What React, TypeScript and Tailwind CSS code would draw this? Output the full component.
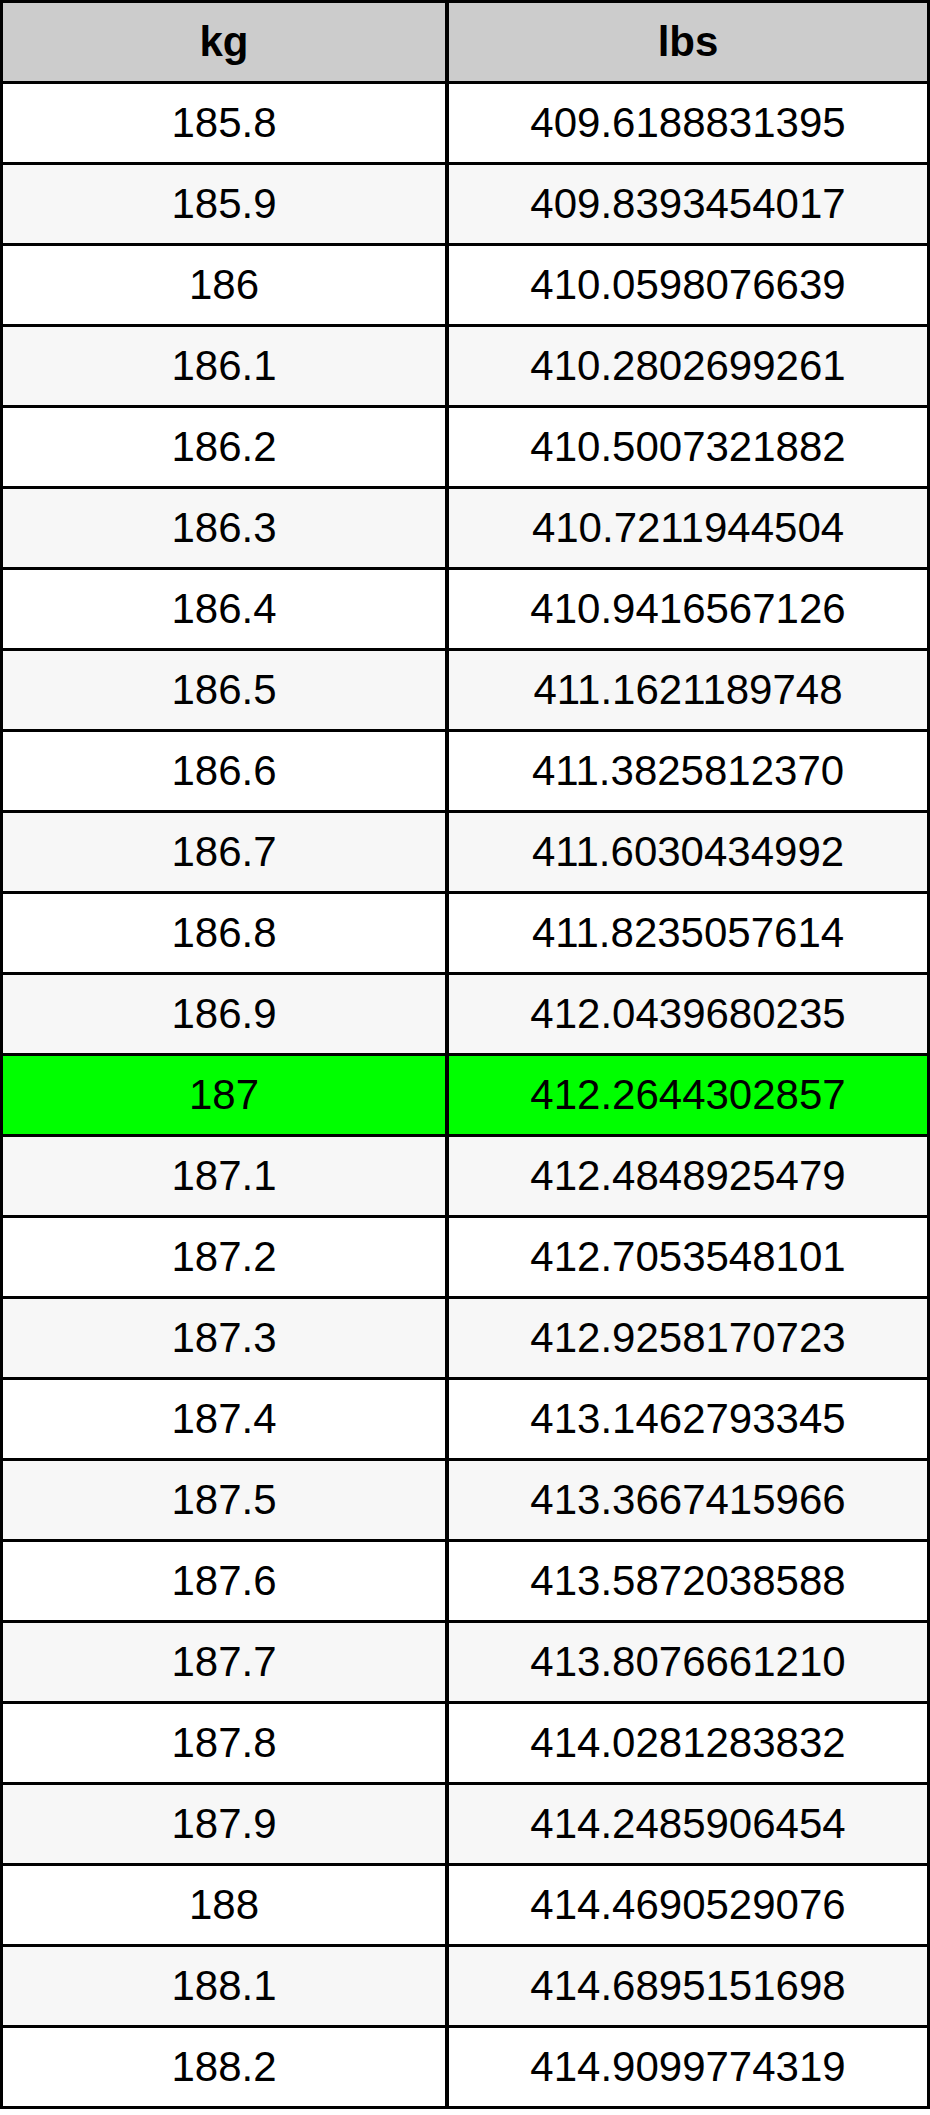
import React from "react";

const rows: [string, string][] = [
  ["185.8", "409.6188831395"],
  ["185.9", "409.8393454017"],
  ["186", "410.0598076639"],
  ["186.1", "410.2802699261"],
  ["186.2", "410.5007321882"],
  ["186.3", "410.7211944504"],
  ["186.4", "410.9416567126"],
  ["186.5", "411.1621189748"],
  ["186.6", "411.3825812370"],
  ["186.7", "411.6030434992"],
  ["186.8", "411.8235057614"],
  ["186.9", "412.0439680235"],
  ["187", "412.2644302857"],
  ["187.1", "412.4848925479"],
  ["187.2", "412.7053548101"],
  ["187.3", "412.9258170723"],
  ["187.4", "413.1462793345"],
  ["187.5", "413.3667415966"],
  ["187.6", "413.5872038588"],
  ["187.7", "413.8076661210"],
  ["187.8", "414.0281283832"],
  ["187.9", "414.2485906454"],
  ["188", "414.4690529076"],
  ["188.1", "414.6895151698"],
  ["188.2", "414.9099774319"],
];

export default function App() {
  return (
    <div className="bg-white w-[930px] min-h-[2115px]" style={{ fontFamily: '"Liberation Sans", Arial, sans-serif' }}>
      <div className="w-[930px] border-[3px] border-black text-black text-[42px] leading-none">
        <div className="flex h-[81px] border-b-[3px] border-black bg-[#cccccc] font-bold">
          <div className="w-[446px] border-r-[4px] border-black flex items-center justify-center">kg</div>
          <div className="flex-1 flex items-center justify-center">lbs</div>
        </div>
        {rows.map(([kg, lbs], i) => {
          const bg = kg === "187" ? "bg-[#00ff00]" : i % 2 === 1 ? "bg-[#f7f7f7]" : "bg-white";
          const last = i === rows.length - 1;
          return (
            <div
              key={kg}
              className={`flex ${last ? "h-[78px]" : "h-[81px] border-b-[3px] border-black"} ${bg}`}
            >
              <div className="w-[446px] border-r-[4px] border-black flex items-center justify-center">{kg}</div>
              <div className="flex-1 flex items-center justify-center">{lbs}</div>
            </div>
          );
        })}
      </div>
    </div>
  );
}
